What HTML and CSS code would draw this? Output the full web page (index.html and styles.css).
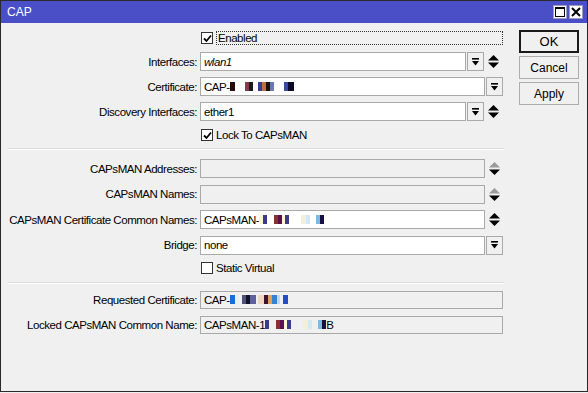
FILE: index.html
```html
<!DOCTYPE html>
<html>
<head>
<meta charset="utf-8">
<link rel="stylesheet" href="styles.css">
</head>
<body>
<div class="window">
  <div class="titlebar">
    <span class="title">CAP</span>
    <div class="tbtns">
      <span class="tbtn"><svg width="10" height="10" viewBox="0 0 10 10"><rect x="0.5" y="0.5" width="9" height="9" fill="none" stroke="#000" stroke-width="1"/><rect x="0.5" y="0.5" width="9" height="1.5" fill="#000"/></svg></span>
      <span class="tbtn"><svg width="10" height="10" viewBox="0 0 10 10"><path d="M1 1 L9 9 M9 1 L1 9" stroke="#000" stroke-width="2"/></svg></span>
    </div>
  </div>
  <div class="body">
    <div class="form">
      <div class="row crow first">
        <div class="label"></div>
        <div class="field"><span class="chk focus"><span class="box"><svg width="9" height="9" viewBox="0 0 9 9"><path d="M1 4.5 L3.5 7 L8 1.5" fill="none" stroke="#000" stroke-width="1.8"/></svg></span><span>Enabled</span></span></div>
      </div>
      <div class="row">
        <div class="label">Interfaces:</div>
        <div class="field"><div class="input"><i>wlan1</i></div><span class="dd"><svg width="9" height="8" viewBox="0 0 9 8"><rect x="1" y="0" width="7" height="1.6" fill="#000"/><polygon points="1,3 8,3 4.5,7.5" fill="#000"/></svg></span><span class="spin"><svg width="11" height="13" viewBox="0 0 11 13"><polygon points="0,5.5 5.5,0 11,5.5" fill="#000"/><polygon points="0,7.5 11,7.5 5.5,13" fill="#000"/></svg></span></div>
      </div>
      <div class="row">
        <div class="label">Certificate:</div>
        <div class="field"><div class="input">CAP-<span class="px" style="background:#2a0b0b;width:5px;margin-left:0"></span><span class="px" style="background:#8a3a4a;width:4px;margin-left:10px"></span><span class="px" style="background:#1a1a1a;width:4px"></span><span class="px" style="background:#3b3b8a;width:4px;margin-left:5px"></span><span class="px" style="background:#c07040;width:4px"></span><span class="px" style="background:#1a1010;width:4px"></span><span class="px" style="background:#6a7ab0;width:4px"></span><span class="px" style="background:#3a4aa0;width:4px;margin-left:10px"></span><span class="px" style="background:#0a0a2a;width:6px"></span></div><span class="dd"><svg width="9" height="8" viewBox="0 0 9 8"><rect x="1" y="0" width="7" height="1.6" fill="#000"/><polygon points="1,3 8,3 4.5,7.5" fill="#000"/></svg></span></div>
      </div>
      <div class="row">
        <div class="label">Discovery Interfaces:</div>
        <div class="field"><div class="input">ether1</div><span class="dd"><svg width="9" height="8" viewBox="0 0 9 8"><rect x="1" y="0" width="7" height="1.6" fill="#000"/><polygon points="1,3 8,3 4.5,7.5" fill="#000"/></svg></span><span class="spin"><svg width="11" height="13" viewBox="0 0 11 13"><polygon points="0,5.5 5.5,0 11,5.5" fill="#000"/><polygon points="0,7.5 11,7.5 5.5,13" fill="#000"/></svg></span></div>
      </div>
      <div class="row crow">
        <div class="label"></div>
        <div class="field"><span class="chk"><span class="box"><svg width="9" height="9" viewBox="0 0 9 9"><path d="M1 4.5 L3.5 7 L8 1.5" fill="none" stroke="#000" stroke-width="1.8"/></svg></span><span>Lock To CAPsMAN</span></span></div>
      </div>
      <div class="sep sep1"></div>
      <div class="row mid">
        <div class="label">CAPsMAN Addresses:</div>
        <div class="field"><div class="input dis"></div><span class="spin wide"><svg width="11" height="13" viewBox="0 0 11 13"><polygon points="0,5.5 5.5,0 11,5.5" fill="#9a9a9a"/><polygon points="0,7.5 11,7.5 5.5,13" fill="#000"/></svg></span></div>
      </div>
      <div class="row mid">
        <div class="label">CAPsMAN Names:</div>
        <div class="field"><div class="input dis"></div><span class="spin wide"><svg width="11" height="13" viewBox="0 0 11 13"><polygon points="0,5.5 5.5,0 11,5.5" fill="#9a9a9a"/><polygon points="0,7.5 11,7.5 5.5,13" fill="#000"/></svg></span></div>
      </div>
      <div class="row mid">
        <div class="label">CAPsMAN Certificate Common Names:</div>
        <div class="field"><div class="input">CAPsMAN-<span class="px" style="background:#fdf6d0;width:4px"></span><span class="px" style="background:#3b3b8a;width:4px"></span><span class="px" style="background:#8a3030;width:4px;margin-left:7px"></span><span class="px" style="background:#5a1050;width:4px"></span><span class="px" style="background:#fdf6d0;width:3px"></span><span class="px" style="background:#3b3b8a;width:4px"></span><span class="px" style="background:#f4eedd;width:5px;margin-left:12px"></span><span class="px" style="background:#d0e8f8;width:4px"></span><span class="px" style="background:#80b8e0;width:4px;margin-left:6px"></span><span class="px" style="background:#1a1040;width:4px"></span></div><span class="spin wide"><svg width="11" height="13" viewBox="0 0 11 13"><polygon points="0,5.5 5.5,0 11,5.5" fill="#000"/><polygon points="0,7.5 11,7.5 5.5,13" fill="#000"/></svg></span></div>
      </div>
      <div class="row mid">
        <div class="label">Bridge:</div>
        <div class="field"><div class="input">none</div><span class="dd"><svg width="9" height="8" viewBox="0 0 9 8"><rect x="1" y="0" width="7" height="1.6" fill="#000"/><polygon points="1,3 8,3 4.5,7.5" fill="#000"/></svg></span></div>
      </div>
      <div class="row crow short">
        <div class="label"></div>
        <div class="field"><span class="chk"><span class="box"></span><span>Static Virtual</span></span></div>
      </div>
      <div class="sep sep2"></div>
      <div class="row ro">
        <div class="label">Requested Certificate:</div>
        <div class="field"><div class="input dis">CAP-<span class="px" style="background:#1a6ae0;width:5px"></span><span class="px" style="background:#e8f0f8;width:3px"></span><span class="px" style="background:#50507a;width:4px;margin-left:4px"></span><span class="px" style="background:#101030;width:4px"></span><span class="px" style="background:#6060a0;width:6px"></span><span class="px" style="background:#f0d8c0;width:6px;margin-left:2px"></span><span class="px" style="background:#401030;width:4px"></span><span class="px" style="background:#e0a060;width:4px"></span><span class="px" style="background:#3a80d0;width:5px"></span><span class="px" style="background:#c0d8f0;width:3px"></span><span class="px" style="background:#2050c0;width:5px;margin-left:3px"></span></div></div>
      </div>
      <div class="row ro">
        <div class="label">Locked CAPsMAN Common Name:</div>
        <div class="field"><div class="input dis">CAPsMAN-1<span class="px" style="background:#3b3b8a;width:4px"></span><span class="px" style="background:#8a3030;width:4px;margin-left:7px"></span><span class="px" style="background:#5a1050;width:4px"></span><span class="px" style="background:#fdf6d0;width:3px"></span><span class="px" style="background:#3b3b8a;width:4px"></span><span class="px" style="background:#f4eedd;width:5px;margin-left:12px"></span><span class="px" style="background:#d0e8f8;width:4px"></span><span class="px" style="background:#80b8e0;width:4px;margin-left:6px"></span><span class="px" style="background:#1a1040;width:4px"></span>B</div></div>
      </div>
    </div>
    <div class="buttons">
      <div class="btn default">OK</div>
      <div class="btn">Cancel</div>
      <div class="btn">Apply</div>
    </div>
  </div>
</div>
</body>
</html>
```
FILE: styles.css
```css
html, body {
  margin: 0;
  padding: 0;
  background: #f0f0f0;
}
body {
  font-family: "Liberation Sans", Arial, sans-serif;
  font-size: 11.5px;
  letter-spacing: -0.45px;
  color: #000;
}
.window {
  width: 588px;
  height: 392px;
  box-sizing: border-box;
  border: 1px solid #2a2a2a;
  background: #f0f0f0;
}
.titlebar {
  height: 22px;
  background: #4a4fc8;
  display: flex;
  align-items: center;
  justify-content: space-between;
  padding: 0 4px 0 6px;
}
.title {
  color: #fff;
  font-size: 12px;
  letter-spacing: 0;
}
.tbtns {
  display: flex;
  gap: 2px;
}
.tbtn {
  width: 14px;
  height: 14px;
  box-sizing: border-box;
  background: #fff;
  border: 1px solid #9a9ac0;
  display: flex;
  align-items: center;
  justify-content: center;
}
.body {
  display: flex;
  align-items: flex-start;
}
.form {
  width: 502px;
  padding-top: 4px;
  display: flex;
  flex-direction: column;
}
.row {
  display: grid;
  grid-template-columns: 196px 303px;
  column-gap: 3px;
  height: 25px;
  align-items: center;
}
.row.crow {
  height: 22px;
}
.row.crow.short {
  height: 20px;
}
.row.mid {
  height: 25.5px;
}
.label {
  text-align: right;
  white-space: nowrap;
}
.field {
  display: flex;
  align-items: center;
  height: 100%;
}
.input {
  flex: 1;
  height: 19px;
  box-sizing: border-box;
  border: 1px solid #a9a9a9;
  background: #fff;
  padding: 0 3px;
  display: flex;
  align-items: center;
  white-space: nowrap;
  overflow: hidden;
}
.input.dis {
  background: #f0f0f0;
}
.row.ro .input {
  height: 18px;
}
.px {
  display: inline-block;
  height: 9px;
}
.dd {
  width: 17px;
  height: 19px;
  box-sizing: border-box;
  border: 1px solid #a9a9a9;
  margin-left: 1px;
  background: #f0f0f0;
  display: flex;
  align-items: center;
  justify-content: center;
}
.spin {
  width: 19px;
  height: 19px;
  display: flex;
  align-items: center;
  justify-content: center;
}
.spin.wide {
  width: 18px;
}
.chk {
  display: inline-flex;
  align-items: center;
  gap: 3px;
  height: 14px;
  padding-left: 1px;
}
.chk.focus {
  flex: 1;
  align-self: center;
}
.chk.focus span:last-child {
  flex: 1;
  height: 14px;
  box-sizing: border-box;
  border: 1px dotted #333;
  display: flex;
  align-items: center;
  padding-left: 1px;
}
.box {
  width: 12px;
  height: 12px;
  box-sizing: border-box;
  border: 1px solid #333;
  background: #fff;
  display: flex;
  align-items: center;
  justify-content: center;
  flex: none;
}
.sep {
  margin-left: 7px;
  width: 496px;
  border-top: 1px solid #dcdcdc;
  border-bottom: 1px solid #fff;
}
.sep1 {
  margin-top: 2px;
  margin-bottom: 6px;
}
.sep2 {
  margin-top: 4px;
  margin-bottom: 3px;
}
.buttons {
  margin-left: 16px;
  margin-top: 7px;
  display: flex;
  flex-direction: column;
  gap: 3px;
}
.btn {
  width: 60px;
  height: 23px;
  box-sizing: border-box;
  border: 1px solid #adadad;
  background: #f0f0f0;
  display: flex;
  align-items: center;
  justify-content: center;
  font-size: 12px;
  letter-spacing: 0;
}
.btn.default {
  border: 2px solid #1a1a1a;
  font-size: 13px;
}
```
